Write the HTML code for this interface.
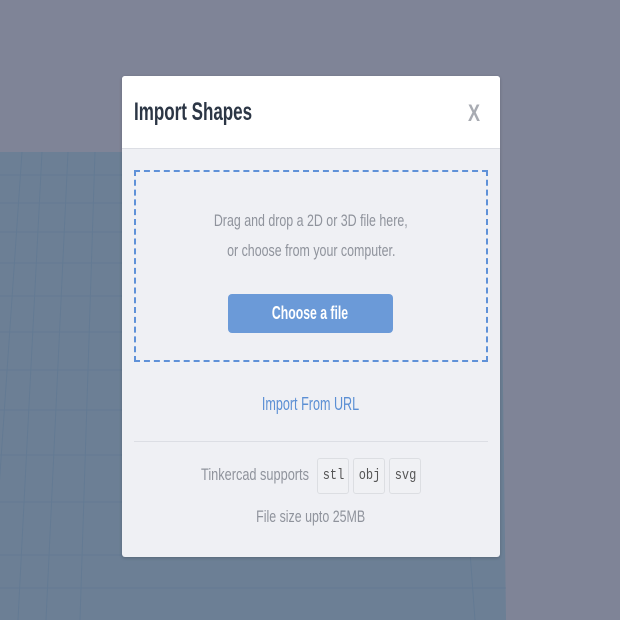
<!DOCTYPE html>
<html><head><style>
body{margin:0;width:620px;height:620px;background:#7f8497;position:relative;overflow:hidden;font-family:"Liberation Sans",sans-serif}
.m{position:absolute;left:122px;top:76px;width:378px;height:481px;background:#eff0f4;border-radius:3px;box-shadow:0 1px 3px rgba(0,0,0,.2);overflow:hidden}
.h{height:72px;background:#fff;border-bottom:1px solid #dcdee4;position:relative}
.h .t{position:absolute;left:12px;top:22px;font-size:25px;color:#2c3645;font-weight:bold;transform:scaleX(.68);transform-origin:left;white-space:nowrap}
.h .x{position:absolute;right:18px;top:24px;font-size:24px;font-weight:bold;color:#a8abb2;transform:scaleX(.75)}
.d{position:absolute;left:12px;top:94px;width:350px;height:188px;border:2px dashed #5f91d8}
.p{position:absolute;width:100%;text-align:center;color:#8f939c;font-size:17px}
.s{display:inline-block;white-space:nowrap;transform:scaleX(.73)}
.b{position:absolute;left:92px;top:122px;width:165px;height:39px;background:#6b9ad8;border-radius:4px;color:#fff;font-size:18px;font-weight:bold;text-align:center;line-height:39px}
.u{position:absolute;left:0;width:100%;top:318px;text-align:center;color:#5b8fd4;font-size:18px}
.hr{position:absolute;left:12px;right:12px;top:365px;border-top:1px solid #dcdee4}
.c{display:inline-block;font-family:"Liberation Mono",monospace;font-size:15px;color:#555;border:1px solid #dcdee2;border-radius:3px;width:30px;text-align:center;height:34px;line-height:34px;margin-left:4px;background:#f0f1f4;vertical-align:middle}
.c span{display:inline-block;transform:scaleX(.8)}
</style></head><body>
<svg width="620" height="620" style="position:absolute;left:0;top:0">
<polygon points="0,152 500,152 506,620 0,620" fill="#6c7f95"/>
<g stroke="#5a7591" stroke-width="1" opacity=".45">
<line x1="0" y1="175" x2="500" y2="175"/><line x1="0" y1="203" x2="500" y2="203"/><line x1="0" y1="232" x2="500" y2="232"/><line x1="0" y1="263" x2="500" y2="263"/><line x1="0" y1="296" x2="500" y2="296"/><line x1="0" y1="332" x2="500" y2="332"/><line x1="0" y1="370" x2="500" y2="370"/><line x1="0" y1="410" x2="500" y2="410"/><line x1="0" y1="455" x2="500" y2="455"/><line x1="0" y1="502" x2="500" y2="502"/><line x1="0" y1="555" x2="500" y2="555"/><line x1="0" y1="588" x2="506" y2="588"/>
<line x1="22" y1="152" x2="-10" y2="620"/><line x1="42" y1="152" x2="18" y2="620"/><line x1="68" y1="152" x2="46" y2="620"/><line x1="95" y1="152" x2="80" y2="620"/><line x1="470" y1="552" x2="475" y2="620"/>
</g></svg>
<div class="m">
<div class="h"><div class="t">Import Shapes</div><div class="x">X</div></div>
<div class="d">
<div class="p" style="top:34px;line-height:30px"><span class="s">Drag and drop a 2D or 3D file here,</span><br><span class="s">or choose from your computer.</span></div>
<div class="b"><span class="s" style="transform:scaleX(.68)">Choose a file</span></div>
</div>
<div class="u"><span class="s" style="transform:scaleX(.7)">Import From URL</span></div>
<div class="hr"></div>
<div class="p" style="top:382px;line-height:34px"><span class="s" style="transform:none"><span class="s" style="transform:scaleX(.75);margin-right:-36px;transform-origin:left">Tinkercad supports</span> <span class="c"><span>stl</span></span><span class="c"><span>obj</span></span><span class="c"><span>svg</span></span></span></div>
<div class="p" style="top:431px"><span class="s">File size upto 25MB</span></div>
</div>
</body></html>
